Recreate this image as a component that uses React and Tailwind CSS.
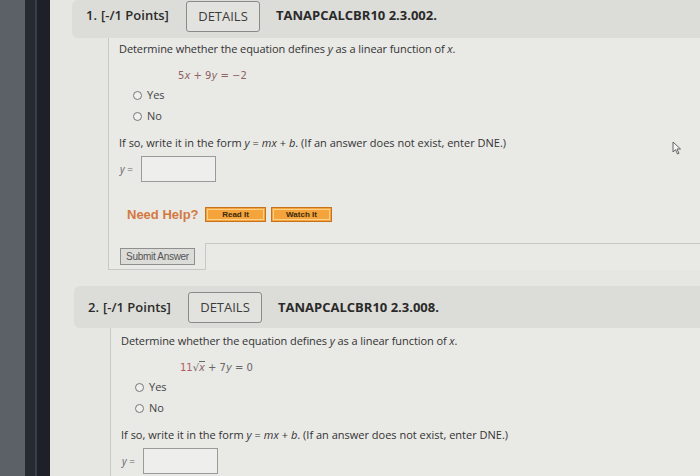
import React from "react";

const body = { fontFamily: '"Open Sans", "Liberation Sans", sans-serif' };
const arial = { fontFamily: '"Liberation Sans", Arial, sans-serif' };

function Header({ num, code, tall }) {
  return (
    <div
      className={
        "flex items-start bg-[#dcdcd8] rounded-bl-md rounded-tl-md text-[13px] text-[#2a2a2a] " +
        (tall ? "h-[42px] pt-[6px]" : "h-[38px]")
      }
      style={body}
    >
      <div className={"flex items-center pl-[14px] font-semibold w-[114px] " + (tall ? "h-[31px]" : "h-[32px]")}>
        <span className="w-[15px]">{num}.</span>
        <span>[-/1 Points]</span>
      </div>
      <div className={"h-[31px] w-[74px] flex items-center justify-center border border-[#8a8a8a] rounded-[3px] bg-[#e2e2de] text-[#3c3c3c] " + (tall ? "" : "mt-[1px]")}>
        DETAILS
      </div>
      <div className={"flex items-center pl-[16px] font-bold " + (tall ? "h-[31px]" : "h-[32px]")}>{code}</div>
    </div>
  );
}

function Radio({ label }) {
  return (
    <div className="flex items-center gap-[5px] h-[21px] pl-[24px] text-[11px] text-[#444]">
      <span className="w-[9px] h-[9px] rounded-full border border-[#777] bg-[#f0f0ee]" />
      <span>{label}</span>
    </div>
  );
}

function Question({ equation, children }) {
  return (
    <div className="text-[#333] text-[11px]" style={body}>
      <div className="pl-[10px] h-[16px] leading-[16px] tracking-[-0.08px]">
        Determine whether the equation defines <i>y</i> as a linear function of <i>x</i>.
      </div>
      <div className="pl-[69px] h-[20px] flex items-center text-[10px] text-[#8f6464] mt-[8px]" style={{ fontFamily: '"DejaVu Sans", sans-serif' }}>
        {equation}
      </div>
      <div>
        <Radio label="Yes" />
        <Radio label="No" />
      </div>
      <div className="pl-[10px] mt-[8px] h-[16px] leading-[16px]">
        If so, write it in the form <i>y</i>
        <span className="px-[3px]">=</span>
        <i>mx</i>
        <span className="px-[3px]">+</span>
        <i>b</i>. (If an answer does not exist, enter DNE.)
      </div>
      <div className="flex items-center mt-[5px] pl-[11px]">
        <span className="text-[10px] text-[#666] w-[21px]">
          <i>y</i> =
        </span>
        <span className="w-[75px] h-[26px] border border-[#9a9a9a] bg-[#eeeeec]" />
      </div>
      {children}
    </div>
  );
}

function HelpButton({ label }) {
  return (
    <div className="w-[61px] h-[15px] bg-[#f4a43a] border border-[#c9721c] p-[1px]">
      <div className="w-full h-full border border-[#fbd08a] flex items-center justify-center text-[8px] font-bold text-[#3a2a10]" style={arial}>
        {label}
      </div>
    </div>
  );
}

export default function App() {
  return (
    <div className="w-[700px] h-[476px] flex overflow-hidden bg-[#e6e6e3] relative">
      {/* monitor bezel */}
      <div className="flex h-full shrink-0">
        <div className="w-[25px] bg-[#5c6168]" />
        <div className="w-[10px] bg-[#262a31]" />
        <div className="w-[2px] bg-[#3a3f47]" />
        <div className="w-[13px] bg-[#1d2027]" />
      </div>

      <div className="flex-1 pl-[22px]">
        <Header num="1" code="TANAPCALCBR10 2.3.002." />
        <div className="ml-[36px] border-l border-[#c8c8c4] bg-[#e9e9e6] pt-[3px]">
          <Question equation={<span>5<i>x</i> + 9<i>y</i> = −2</span>}>
            <div className="flex items-center pl-[18px] mt-[25px] h-[15px]">
              <span className="text-[13px] font-bold text-[#d4783f] w-[78px]" style={arial}>
                Need Help?
              </span>
              <HelpButton label="Read It" />
              <span className="w-[5px]" />
              <HelpButton label="Watch It" />
            </div>
          </Question>
          <div className="flex mt-[21px]">
            <div className="w-[97px] h-[27px] border-r border-b border-[#c8c8c4] pt-[5px] pl-[11px]">
              <div className="w-[75px] h-[17px] bg-[#dcdcd9] border border-[#8f8f8f] flex items-center justify-center text-[10px] text-[#555] tracking-[-0.3px]" style={arial}>
                Submit Answer
              </div>
            </div>
            <div className="flex-1 border-t border-[#c8c8c4]" />
          </div>
        </div>

        <div className="mt-[16px] ml-[2px]">
          <Header num="2" code="TANAPCALCBR10 2.3.008." tall />
          <div className="ml-[36px] border-l border-[#c8c8c4] bg-[#e9e9e6] h-[200px] pt-[5px]">
            <Question
              equation={
                <span className="flex items-center">
                  <span className="text-[#b06060]">11</span>
                  <span className="text-[#666]">√</span>
                  <span className="border-t border-[#666] leading-[12px]"><i>x</i></span>
                  <span className="ml-[3px] text-[#666]">+ 7<i>y</i> = 0</span>
                </span>
              }
            />
          </div>
        </div>
      </div>

      {/* mouse pointer */}
      <svg className="absolute left-[672px] top-[141px]" width="10" height="14" viewBox="0 0 10 14">
        <path d="M1 1 L1 11 L3.5 8.7 L5.5 13 L7 12.3 L5 8 L8.5 8 Z" fill="#f4f4f2" stroke="#555" strokeWidth="0.9" strokeLinejoin="round" />
      </svg>
    </div>
  );
}
